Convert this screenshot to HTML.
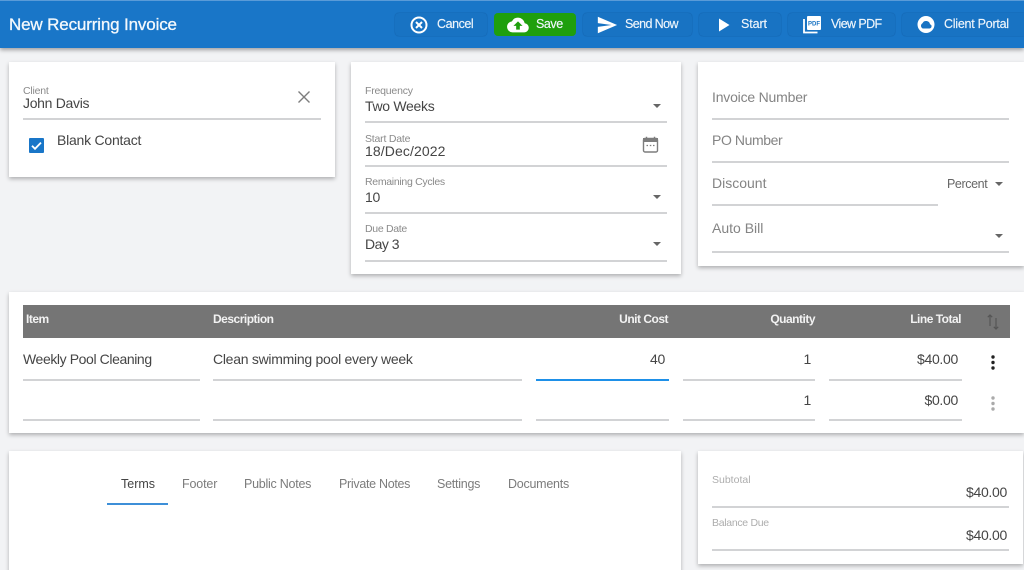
<!DOCTYPE html>
<html><head><meta charset="utf-8">
<style>
html,body{margin:0;padding:0;width:1024px;height:570px;overflow:hidden}
body{background:#f2f3f5;font-family:"Liberation Sans",sans-serif;color:#454545}
#w{position:absolute;left:0;top:0;width:1024px;height:570px;overflow:hidden;background:#f2f3f5}
.c{position:absolute;background:#fff;box-shadow:0 2px 4px rgba(0,0,0,.28)}
.t{position:absolute;white-space:nowrap;line-height:16px;font-size:14px;letter-spacing:-.3px}
.r{text-align:right}
.l{position:absolute;height:2px;background:#d2d3d5}
.t.lab{font-size:10.5px;color:#8a8a8a;letter-spacing:-.2px}
.t.ph{color:#848484;font-size:14px;letter-spacing:-.2px}
.btn{position:absolute;top:13px;height:23px;background:#1873c3;border-radius:4px;box-shadow:0 0 1px rgba(0,40,90,.5)}
.t.bt{color:#eef5fb;font-size:12.5px;letter-spacing:-.45px;-webkit-text-stroke:.15px #eef5fb}
.t.h{color:#f2f2f2;font-size:12px;font-weight:bold;letter-spacing:-.5px}
.t.tab{font-size:12.5px;color:#7c7c7c;letter-spacing:-.25px}
svg{position:absolute}
.tri{position:absolute;width:0;height:0;border-left:4.5px solid transparent;border-right:4.5px solid transparent;border-top:4.5px solid #666}
</style></head><body><div id="w">
<div style="position:absolute;left:0;top:0;width:1024px;height:48px;background:#1976c8;border-top:1px solid #5a9bd8;box-sizing:border-box;box-shadow:0 2px 4px rgba(0,0,0,.35)"></div>
<div class="t" style="left:9px;top:16px;font-size:17px;color:#f3f8fc;line-height:18px;letter-spacing:-.15px;-webkit-text-stroke:.3px #f3f8fc">New Recurring Invoice</div>

<div class="btn" style="left:395px;width:92px"></div>
<svg style="left:409px;top:15px" width="20" height="20" viewBox="0 0 20 20" fill="none" stroke="#fff" stroke-width="2"><circle cx="10" cy="10" r="7.5"/><path d="M7 7l6 6M13 7l-6 6"/></svg>
<div class="t bt" style="left:437px;top:16px">Cancel</div>

<div class="btn" style="left:494px;width:82px;background:#1f9f0d;box-shadow:none"></div>
<svg style="left:506px;top:14px" width="24" height="22" viewBox="0 0 24 24"><path fill="#fff" d="M19.35 10.04A7.49 7.49 0 0 0 12 4a7.5 7.5 0 0 0-6.65 4.04A6 6 0 0 0 6 20h13a5 5 0 0 0 .35-9.96zM14 13v4h-4v-4H7l5-5 5 5h-3z"/></svg>
<div class="t bt" style="left:536px;top:16px">Save</div>

<div class="btn" style="left:583px;width:109px"></div>
<svg style="left:596px;top:14px" width="22" height="22" viewBox="0 0 24 24"><path fill="#fff" d="M2 21l21-9L2 3v7l15 2-15 2z"/></svg>
<div class="t bt" style="left:625px;top:16px;letter-spacing:-.6px">Send Now</div>

<div class="btn" style="left:699px;width:82px"></div>
<svg style="left:714px;top:15px" width="20" height="20" viewBox="0 0 20 20"><path fill="#fff" d="M5 3.500 15.500 10 5 16.500z"/></svg>
<div class="t bt" style="left:741px;top:16px;letter-spacing:-.1px">Start</div>

<div class="btn" style="left:788px;width:107px"></div>
<svg style="left:803px;top:15px" width="18" height="20" viewBox="0 0 18 20"><rect x="4" y="1" width="14" height="14" rx="1" fill="#fff"/><path d="M1 4v13.500h13.500" fill="none" stroke="#fff" stroke-width="1.800"/><text x="11" y="10.500" font-size="6" font-weight="bold" text-anchor="middle" fill="#1873c3" font-family="Liberation Sans">PDF</text></svg>
<div class="t bt" style="left:831px;top:16px;letter-spacing:-.6px">View PDF</div>

<div class="btn" style="left:902px;width:122px;border-radius:4px 0 0 4px"></div>
<svg style="left:916px;top:15px" width="20" height="20" viewBox="0 0 20 20"><circle cx="10" cy="9.500" r="8.500" fill="#fff"/><path fill="#1873c3" d="M14 9.200a4 4 0 0 0-7.500-1A3 3 0 0 0 6.700 13.500h6.800a2.200 2.200 0 0 0 .5-4.300z"/></svg>
<div class="t bt" style="left:944px;top:16px;letter-spacing:-.25px">Client Portal</div>

<div class="c" style="left:9px;top:62px;width:326px;height:115px"></div>
<div class="t lab" style="left:23px;top:83px">Client</div>
<div class="t" style="left:23px;top:95px">John Davis</div>
<svg style="left:296px;top:89px" width="16" height="16" viewBox="0 0 16 16" stroke="#7d7d7d" stroke-width="1.400"><path d="M2.500 2.500l11 11M13.500 2.500l-11 11"/></svg>
<div class="l" style="left:23px;top:118px;width:298px"></div>
<div style="position:absolute;left:29px;top:138px;width:15px;height:15px;background:#1976c8;border-radius:1px"></div>
<svg style="left:29px;top:138px" width="15" height="15" viewBox="0 0 15 15" fill="none" stroke="#fff" stroke-width="1.800"><path d="M3 7.800l3 3 6-6.200"/></svg>
<div class="t" style="left:57px;top:132px;letter-spacing:-.23px">Blank Contact</div>

<div class="c" style="left:351px;top:62px;width:330px;height:212px"></div>
<div class="t lab" style="left:365px;top:83px">Frequency</div>
<div class="t" style="left:365px;top:98px">Two Weeks</div>
<div class="tri" style="left:653px;top:104px"></div>
<div class="l" style="left:365px;top:121px;width:302px"></div>
<div class="t lab" style="left:365px;top:131px">Start Date</div>
<div class="t" style="left:365px;top:143px;letter-spacing:.1px">18/Dec/2022</div>
<svg style="left:642px;top:136px" width="18" height="18" viewBox="0 0 18 18" fill="none" stroke="#7d7d7d"><rect x="1.500" y="2.500" width="14" height="13.500" rx="1.500" stroke-width="1.400"/><rect x="1.500" y="2.500" width="14" height="3" fill="#7d7d7d"/><path d="M4.500 .8v2M12.500 .8v2" stroke-width="1.400"/><path d="M4.500 9.500h1.500M7.800 9.500h1.500M11 9.500h1.500" stroke-width="1.200"/></svg>
<div class="l" style="left:365px;top:165px;width:302px"></div>
<div class="t lab" style="left:365px;top:174px;letter-spacing:-.3px">Remaining Cycles</div>
<div class="t" style="left:365px;top:189px">10</div>
<div class="tri" style="left:653px;top:195px"></div>
<div class="l" style="left:365px;top:212px;width:302px"></div>
<div class="t lab" style="left:365px;top:221px;letter-spacing:-.3px">Due Date</div>
<div class="t" style="left:365px;top:236px;letter-spacing:-.5px">Day 3</div>
<div class="tri" style="left:653px;top:242px"></div>
<div class="l" style="left:365px;top:260px;width:302px"></div>

<div class="c" style="left:698px;top:62px;width:326px;height:204px"></div>
<div class="t ph" style="left:712px;top:89px">Invoice Number</div>
<div class="l" style="left:712px;top:118px;width:297px"></div>
<div class="t ph" style="left:712px;top:132px;letter-spacing:-.4px">PO Number</div>
<div class="l" style="left:712px;top:161px;width:297px"></div>
<div class="t ph" style="left:712px;top:175px;letter-spacing:0">Discount</div>
<div class="t" style="left:947px;top:176px;font-size:12.500px;color:#666;letter-spacing:-.4px">Percent</div>
<div class="tri" style="left:995px;top:182px"></div>
<div class="l" style="left:712px;top:204px;width:226px"></div>
<div class="t ph" style="left:712px;top:220px;letter-spacing:0">Auto Bill</div>
<div class="tri" style="left:995px;top:234px"></div>
<div class="l" style="left:712px;top:251px;width:297px"></div>

<div class="c" style="left:9px;top:292px;width:1015px;height:141px"></div>
<div style="position:absolute;left:23px;top:305px;width:987px;height:33px;background:#757575"></div>
<div class="t h" style="left:26px;top:311px">Item</div>
<div class="t h" style="left:213px;top:311px">Description</div>
<div class="t h r" style="left:568px;width:100px;top:311px">Unit Cost</div>
<div class="t h r" style="left:715px;width:100px;top:311px">Quantity</div>
<div class="t h r" style="left:861px;width:100px;top:311px">Line Total</div>
<svg style="left:986px;top:313px" width="14" height="18" viewBox="0 0 14 18" fill="none" stroke="#555" stroke-width="1.200"><path d="M4 13V2M1.800 4.200 4 2l2.200 2.200M10 5v11M7.800 13.800 10 16l2.200-2.200"/></svg>

<div class="t" style="left:23px;top:351px;letter-spacing:-.4px">Weekly Pool Cleaning</div>
<div class="t" style="left:213px;top:351px;letter-spacing:-.27px">Clean swimming pool every week</div>
<div class="t r" style="left:565px;width:100px;top:351px">40</div>
<div class="t r" style="left:711px;width:100px;top:351px">1</div>
<div class="t r" style="left:858px;width:100px;top:351px">$40.00</div>
<svg style="left:989px;top:354px" width="8" height="18"><circle cx="4" cy="3" r="1.700" fill="#222"/><circle cx="4" cy="8.500" r="1.700" fill="#222"/><circle cx="4" cy="14" r="1.700" fill="#222"/></svg>
<div class="l" style="left:23px;top:379px;width:177px"></div>
<div class="l" style="left:213px;top:379px;width:309px"></div>
<div class="l" style="left:536px;top:379px;width:133px;background:#1e90e8"></div>
<div class="l" style="left:683px;top:379px;width:132px"></div>
<div class="l" style="left:829px;top:379px;width:133px"></div>

<div class="t r" style="left:711px;width:100px;top:392px">1</div>
<div class="t r" style="left:858px;width:100px;top:392px">$0.00</div>
<svg style="left:989px;top:395px" width="8" height="18"><circle cx="4" cy="3" r="1.700" fill="#aaa"/><circle cx="4" cy="8.500" r="1.700" fill="#aaa"/><circle cx="4" cy="14" r="1.700" fill="#aaa"/></svg>
<div class="l" style="left:23px;top:419px;width:177px"></div>
<div class="l" style="left:213px;top:419px;width:309px"></div>
<div class="l" style="left:536px;top:419px;width:133px"></div>
<div class="l" style="left:683px;top:419px;width:132px"></div>
<div class="l" style="left:829px;top:419px;width:133px"></div>

<div class="c" style="left:9px;top:451px;width:672px;height:130px"></div>
<div class="t tab" style="left:121px;top:476px;color:#444;letter-spacing:0">Terms</div>
<div class="t tab" style="left:182px;top:476px;letter-spacing:-.15px">Footer</div>
<div class="t tab" style="left:244px;top:476px">Public Notes</div>
<div class="t tab" style="left:339px;top:476px;letter-spacing:-.3px">Private Notes</div>
<div class="t tab" style="left:437px;top:476px">Settings</div>
<div class="t tab" style="left:508px;top:476px">Documents</div>
<div style="position:absolute;left:107px;top:503px;width:61px;height:2px;background:#3d8fd8"></div>

<div class="c" style="left:698px;top:451px;width:325px;height:113px"></div>
<div class="t lab" style="left:712px;top:472px;color:#adadad;letter-spacing:0">Subtotal</div>
<div class="t r" style="left:907px;width:100px;top:484px">$40.00</div>
<div class="l" style="left:712px;top:506px;width:297px"></div>
<div class="t lab" style="left:712px;top:515px;color:#adadad;letter-spacing:-.3px">Balance Due</div>
<div class="t r" style="left:907px;width:100px;top:527px">$40.00</div>
<div class="l" style="left:712px;top:549px;width:297px"></div>
</div></body></html>
